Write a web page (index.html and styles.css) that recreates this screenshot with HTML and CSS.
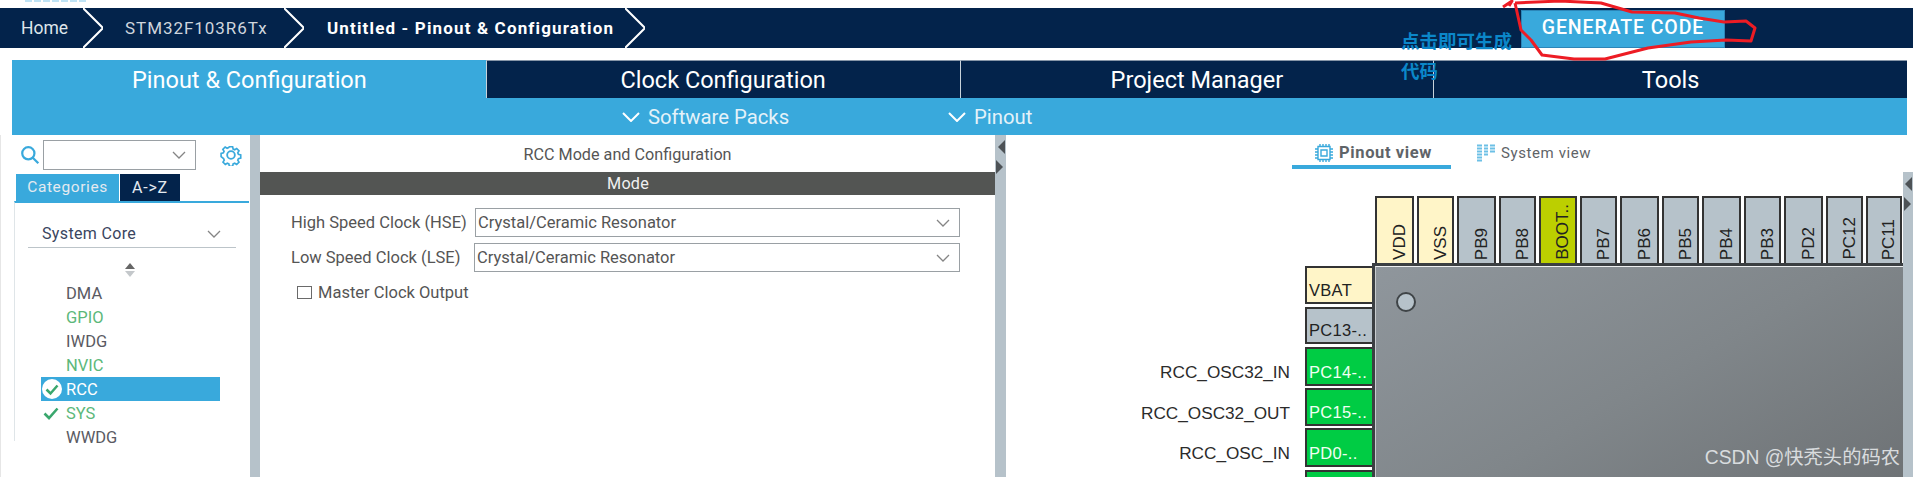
FILE: index.html
```html
<!DOCTYPE html>
<html lang="en">
<head>
<meta charset="utf-8">
<title>STM32CubeMX</title>
<link rel="stylesheet" href="styles.css">
</head>
<body>
<div class="page">
  <div class="top-gap"></div>
  <header class="crumbs">
    <span class="crumb crumb-home">Home</span>
    <svg class="crumb-arrow" viewBox="0 0 20 40"><path d="M0 0 L20 20 L0 40"/></svg>
    <span class="crumb crumb-chip">STM32F103R6Tx</span>
    <svg class="crumb-arrow" viewBox="0 0 20 40"><path d="M0 0 L20 20 L0 40"/></svg>
    <span class="crumb crumb-current">Untitled - Pinout &amp; Configuration</span>
    <svg class="crumb-arrow" viewBox="0 0 20 40"><path d="M0 0 L20 20 L0 40"/></svg>
    <button class="generate">GENERATE CODE</button>
  </header>
  <nav class="tabs">
    <div class="tab tab-active">Pinout &amp; Configuration</div>
    <div class="tab">Clock Configuration</div>
    <div class="tab">Project Manager</div>
    <div class="tab">Tools</div>
  </nav>
  <div class="subbar">
    <span class="sub-item sub-packs"><svg class="sub-chev" viewBox="0 0 18 10"><path d="M1 1 L9 9 L17 1"/></svg>Software Packs</span>
    <span class="sub-item sub-pinout"><svg class="sub-chev" viewBox="0 0 18 10"><path d="M1 1 L9 9 L17 1"/></svg>Pinout</span>
  </div>
  <main class="main">
    <aside class="sidebar">
      <div class="search-row">
        <svg class="search-icon" viewBox="0 0 18 18"><circle cx="7.5" cy="7.5" r="5.5"/><path d="M11.5 11.5 L16.5 16.5"/></svg>
        <div class="search-box"><svg class="small-chev" viewBox="0 0 14 8"><path d="M1 1 L7 7 L13 1"/></svg></div>
        <svg class="gear-icon" viewBox="0 0 24 24"><path d="M10 2h4l.6 2.8 1.9.8 2.4-1.5 2.8 2.8-1.5 2.4.8 1.9 2.8.6v4l-2.8.6-.8 1.9 1.5 2.4-2.8 2.8-2.4-1.5-1.9.8-.6 2.8h-4l-.6-2.8-1.9-.8-2.4 1.5-2.8-2.8 1.5-2.4-.8-1.9L0 14v-4l2.8-.6.8-1.9-1.5-2.4 2.8-2.8 2.4 1.5 1.9-.8z" transform="translate(1.2 1.2) scale(.9)"/><circle cx="12" cy="12" r="4.2"/></svg>
      </div>
      <div class="cat-tabs">
        <span class="cat-tab cat-active">Categories</span>
        <span class="cat-tab">A-&gt;Z</span>
      </div>
      <div class="cat-panel">
        <div class="cat-head"><span>System Core</span><svg class="small-chev" viewBox="0 0 14 8"><path d="M1 1 L7 7 L13 1"/></svg></div>
        <div class="sorter"><i class="sort-up"></i><i class="sort-down"></i></div>
        <ul class="periph">
          <li class="item">DMA</li>
          <li class="item item-ok">GPIO</li>
          <li class="item">IWDG</li>
          <li class="item item-ok">NVIC</li>
          <li class="item item-sel"><svg class="check-round" viewBox="0 0 20 20"><circle cx="10" cy="10" r="10"/><path d="M4.5 10.5 L8.5 14.5 L15.5 6.5"/></svg>RCC</li>
          <li class="item item-ok"><svg class="check-plain" viewBox="0 0 16 14"><path d="M1.5 7.5 L6 12 L14.5 2.5"/></svg>SYS</li>
          <li class="item">WWDG</li>
        </ul>
      </div>
    </aside>
    <div class="strip"></div>
    <section class="config">
      <div class="config-title">RCC Mode and Configuration</div>
      <div class="mode-bar">Mode</div>
      <div class="form-row form-hse">
        <label class="form-label">High Speed Clock (HSE)</label>
        <div class="select"><span>Crystal/Ceramic Resonator</span><svg class="small-chev" viewBox="0 0 14 8"><path d="M1 1 L7 7 L13 1"/></svg></div>
      </div>
      <div class="form-row form-lse">
        <label class="form-label">Low Speed Clock (LSE)</label>
        <div class="select"><span>Crystal/Ceramic Resonator</span><svg class="small-chev" viewBox="0 0 14 8"><path d="M1 1 L7 7 L13 1"/></svg></div>
      </div>
      <div class="check-row"><span class="checkbox"></span>Master Clock Output</div>
    </section>
    <div class="strip strip-mid">
      <i class="arrow-left"></i><i class="arrow-right"></i>
    </div>
    <section class="pinout">
      <div class="views">
        <div class="view view-active">
          <svg class="view-icon" viewBox="0 0 18 18"><path d="M3 2.5h12v13H3zM6 6h6v6H6z" class="chip-line"/><path d="M5 0v3M8 0v3M11 0v3M14 0v3M5 15v3M8 15v3M11 15v3M14 15v3M0 5h3M0 8h3M0 11h3M0 14h3M15 5h3M15 8h3M15 11h3M15 14h3" class="chip-line"/></svg>
          Pinout view
        </div>
        <div class="view">
          <svg class="view-icon" viewBox="0 0 18 18"><path class="sys-lines" d="M0 1.5h5M7 1.5h4M13 1.5h5M0 4.5h5M7 4.5h4M13 4.5h5M0 7.5h5M7 7.5h4M13 7.5h5M0 10.5h5M7 10.5h4M0 13.5h5M0 16.5h5"/></svg>
          System view
        </div>
      </div>
      <div class="top-pins">
        <div class="tpin w39 pin-pow"><span>VDD</span></div>
        <div class="tpin w37 pin-pow"><span>VSS</span></div>
        <div class="tpin w39"><span>PB9</span></div>
        <div class="tpin w37"><span>PB8</span></div>
        <div class="tpin w38 pin-boot"><span>BOOT..</span></div>
        <div class="tpin w37"><span>PB7</span></div>
        <div class="tpin w39"><span>PB6</span></div>
        <div class="tpin w37"><span>PB5</span></div>
        <div class="tpin w39"><span>PB4</span></div>
        <div class="tpin w37"><span>PB3</span></div>
        <div class="tpin w39"><span>PD2</span></div>
        <div class="tpin w37"><span>PC12</span></div>
        <div class="tpin w36"><span>PC11</span></div>
      </div>
      <div class="chip-row">
        <div class="left-pins">
          <div class="pin-row row-wide"><div class="lpin h38 pin-pow">VBAT</div></div>
          <div class="pin-row row-wide"><div class="lpin h37">PC13-..</div></div>
          <div class="pin-row"><span class="pin-label">RCC_OSC32_IN</span><div class="lpin h39 pin-on">PC14-..</div></div>
          <div class="pin-row"><span class="pin-label">RCC_OSC32_OUT</span><div class="lpin h38 pin-on">PC15-..</div></div>
          <div class="pin-row row-wide"><span class="pin-label">RCC_OSC_IN</span><div class="lpin h39 pin-on">PD0-..</div></div>
          <div class="pin-row"><div class="lpin h39 pin-on"></div></div>
        </div>
        <div class="chip">
          <div class="chip-inner"><span class="chip-dot"></span></div>
        </div>
      </div>
    </section>
    <div class="strip strip-right">
      <i class="arrow-left"></i><i class="arrow-right"></i>
    </div>
  </main>
  <div class="note">点击即可生成<br>代码</div>
  <svg class="scribble" viewBox="0 0 1913 477"><path d="M1503 7 L1512 1 L1509 6 M1515 3 L1560 1 L1601 3 L1632 12 L1675 13 L1699 18 L1724 22 L1746 21 L1755 28 L1751 41 L1726 40 L1691 42 L1648 48 L1605 59 L1574 59 L1542 55 L1531 40 L1521 30 L1515 3"/></svg>
  <div class="watermark">CSDN @快秃头的码农</div>
</div>
</body>
</html>
```
FILE: styles.css
```css
* { box-sizing: border-box; }
html, body { margin: 0; padding: 0; background: #fff; }
.page {
  position: relative;
  width: 1913px;
  height: 477px;
  overflow: hidden;
  font-family: Roboto, "Liberation Sans", sans-serif;
  color: #555;
}
.top-gap { height: 8px; padding: 0 0 0 25px; }
.top-gap::before {
  content: "";
  display: block;
  width: 63px;
  height: 2px;
  background: repeating-linear-gradient(90deg, #bfe3f5 0 7px, #fff 7px 9px);
}

.crumbs {
  display: flex;
  align-items: center;
  height: 40px;
  background: #03234b;
  color: #fff;
  position: relative;
}
.crumb { font-size: 17px; white-space: nowrap; }
.crumb-home { margin-left: 21px; width: 62px; font-size: 17.5px; color: #dfe5ea; }
.crumb-chip { margin-left: 22px; width: 159px; color: #cfd6de; letter-spacing: .95px; }
.crumb-current { margin-left: 23px; width: 298px; font-weight: 700; letter-spacing: 1.15px; }
.crumb-arrow { width: 20px; height: 40px; flex: none; }
.crumb-arrow path { fill: none; stroke: #fff; stroke-width: 2; }
.generate {
  margin-left: 876px;
  margin-top: 1px;
  width: 204px;
  height: 38px;
  border: 1px solid #2c86b8;
  background: #39a9dc;
  color: #fff;
  font: 500 19.5px Roboto, sans-serif;
  letter-spacing: .9px;
  padding: 0 0 2px;
}

.tabs {
  display: flex;
  height: 38px;
  margin: 12px 6px 0 12px;
  background: #03234b;
}
.tab {
  flex: 1;
  text-align: center;
  color: #fff;
  font-size: 23.5px;
  line-height: 38px;
  border-left: 1px solid #c8d2da;
  border-top: 1px solid #8796a8;
}
.tab-active { background: #39a9dc; border-color: #39a9dc; }
.subbar {
  position: relative;
  display: flex;
  height: 37px;
  margin: 0 6px 0 12px;
  background: #39a9dc;
  color: #e4f2f9;
  font-size: 20.3px;
  line-height: 36px;
}
.sub-item { display: flex; align-items: center; white-space: nowrap; }
.sub-packs { margin-left: 610px; width: 326px; }
.sub-chev { width: 18px; height: 10px; margin-right: 8px; }
.sub-chev path { fill: none; stroke: #fff; stroke-width: 2; }

.main { display: flex; height: 342px; }
.sidebar { width: 250px; flex: none; padding-left: 13px; border-left: 1px solid #e6e6e6; }
.strip { position: relative; width: 10px; flex: none; background: #b6c2ca; }
.strip-mid { width: 11px; }
.strip-right { margin-top: 37px; }
.arrow-left, .arrow-right {
  position: absolute;
  right: 1px;
  width: 0;
  height: 0;
  border-top: 7px solid transparent;
  border-bottom: 7px solid transparent;
}
.arrow-left { top: 5px; border-right: 7px solid #4d5256; }
.arrow-right { top: 25px; left: 1px; border-left: 7px solid #4d5256; }

.search-row { display: flex; align-items: center; height: 36px; padding-top: 3px; }
.search-icon { width: 20px; height: 20px; margin-left: 6px; flex: none; }
.search-icon circle, .search-icon path { fill: none; stroke: #39a9dc; stroke-width: 2; }
.search-box {
  display: flex;
  align-items: center;
  justify-content: flex-end;
  width: 153px;
  height: 30px;
  margin-left: 3px;
  padding-right: 9px;
  border: 1px solid #9aa0a4;
}
.small-chev { width: 14px; height: 8px; flex: none; }
.small-chev path { fill: none; stroke: #858585; stroke-width: 1.3; }
.gear-icon { width: 22px; height: 22px; margin-left: 24px; }
.gear-icon path, .gear-icon circle { fill: none; stroke: #39a9dc; stroke-width: 2; }

.cat-tabs { display: flex; gap: 1px; margin: 3px 0 0 2px; height: 27px; }
.cat-tab {
  width: 60px;
  background: #03234b;
  color: #e4eaf0;
  text-align: center;
  font-size: 16px;
  line-height: 27px;
  letter-spacing: .8px;
}
.cat-active { width: 103px; background: #39a9dc; font-size: 15.5px; letter-spacing: .6px; }
.cat-panel {
  width: 235px;
  height: 240px;
  border-top: 2px solid #39a9dc;
  border-left: 1px solid #dfe5e8;
}
.cat-head {
  display: flex;
  justify-content: space-between;
  align-items: center;
  height: 45px;
  margin: 0 13px 0 13px;
  padding: 17px 15px 0 14px;
  border-bottom: 1px solid #bcc4c9;
  color: #3a4560;
  font-size: 16px;
  letter-spacing: .35px;
}
.sorter { display: flex; flex-direction: column; align-items: flex-start; gap: 2px; margin-top: 15px; padding-left: 110px; }
.sort-up, .sort-down { width: 0; height: 0; border-left: 5px solid transparent; border-right: 5px solid transparent; }
.sort-up { border-bottom: 6px solid #666; }
.sort-down { border-top: 6px solid #c4c8cb; }
.periph { list-style: none; margin: 4px 0 0 26px; padding: 0; }
.item {
  position: relative;
  width: 179px;
  height: 24px;
  padding-left: 25px;
  line-height: 25px;
  font-size: 16.5px;
  color: #5a5a62;
}
.item-ok { color: #5cb87a; }
.item-sel { background: #39a9dc; color: #fff; }
.check-round { position: absolute; left: 1px; top: 2px; width: 20px; height: 20px; }
.check-round circle { fill: #fff; }
.check-round path { fill: none; stroke: #3aa76d; stroke-width: 2.5; }
.check-plain { position: absolute; left: 2px; top: 5px; width: 16px; height: 14px; }
.check-plain path { fill: none; stroke: #3aa76d; stroke-width: 2.6; }

.config { width: 735px; flex: none; }
.config-title { height: 37px; text-align: center; padding-top: 10px; font-size: 16.2px; color: #555; }
.mode-bar {
  height: 23px;
  line-height: 24px;
  margin-right: -1px;
  background: #535553;
  color: #f0f0f0;
  text-align: center;
  font-size: 16.2px;
  letter-spacing: .2px;
}
.form-row { display: flex; align-items: center; height: 29px; color: #555; font-size: 16.5px; }
.form-hse { margin-top: 13px; }
.form-lse { margin-top: 6px; }
.form-label { margin-left: 31px; white-space: nowrap; }
.form-hse .form-label { width: 184px; }
.form-lse .form-label { width: 183px; }
.select {
  display: flex;
  align-items: center;
  justify-content: space-between;
  height: 29px;
  padding: 0 9px 0 2px;
  border: 1px solid #9aa0a4;
  width: 485px;
}
.form-lse .select { width: 486px; }
.check-row { display: flex; align-items: center; margin: 11px 0 0 37px; font-size: 16.5px; color: #555; }
.checkbox { width: 15px; height: 13px; margin-right: 6px; border: 1px solid #6a6a6a; }

.pinout { width: 897px; flex: none; display: flex; flex-direction: column; }
.views { display: flex; height: 34px; padding-left: 286px; }
.view {
  display: flex;
  align-items: center;
  justify-content: center;
  gap: 6px;
  height: 34px;
  color: #5f6468;
  font-size: 15px;
  letter-spacing: .6px;
  padding-top: 5px;
}
.view-active { width: 159px; padding-left: 4px; font-size: 16.5px; font-weight: 700; border-bottom: 4px solid #39a9dc; margin-right: 26px; }
.view:not(.view-active) { padding-bottom: 4px; }
.view-icon { width: 18px; height: 18px; }
.chip-line { fill: none; stroke: #39a9dc; stroke-width: 1.4; }
.sys-lines { fill: none; stroke: #6cc0e6; stroke-width: 2; }

.top-pins { display: flex; gap: 3px; height: 67px; margin-top: 27px; padding-left: 369px; }
.tpin {
  display: flex;
  justify-content: center;
  align-items: flex-end;
  height: 67px;
  padding: 0 0 3px 10px;
  background: #b6c2ca;
  border: 2px solid #333;
  border-bottom: 0;
  color: #222;
  font: 17px "Liberation Sans", sans-serif;
}
.tpin span { writing-mode: vertical-rl; transform: rotate(180deg); white-space: nowrap; }
.w36 { width: 36px; }
.w37 { width: 37px; }
.w38 { width: 38px; }
.w39 { width: 39px; }
.pin-pow { background: #fff5c8; }
.pin-boot { background: #bccf00; }

.chip-row { display: flex; flex: 1; }
.left-pins {
  display: flex;
  flex-direction: column;
  gap: 2px;
  width: 366px;
  padding-top: 3px;
  font-family: "Liberation Sans", sans-serif;
}
.pin-row { display: flex; justify-content: flex-end; align-items: center; gap: 15px; }
.row-wide { margin-bottom: 1px; }
.pin-label { color: #2b2b2b; font-size: 17.2px; white-space: nowrap; margin-top: 12px; }
.lpin {
  display: flex;
  align-items: flex-end;
  flex: none;
  width: 67px;
  padding: 0 0 2px 2px;
  background: #b6c2ca;
  border: 2px solid #333;
  border-right: 0;
  color: #222;
  font-size: 16.5px;
  line-height: 20px;
  letter-spacing: .3px;
  white-space: nowrap;
}
.lpin.pin-pow { background: #fff5c8; }
.h37 { height: 37px; }
.h38 { height: 38px; }
.h39 { height: 39px; }
.pin-on { background: #00cc44; color: #f0fff4; }
.chip {
  flex: 1;
  background: #3b3f42;
  padding: 3px 0 0 3px;
}
.chip-inner {
  position: relative;
  height: 100%;
  border-top: 1px solid #eef0f1;
  border-left: 1px solid #c8ccce;
  background: linear-gradient(150deg, #8f969c 0%, #80868a 50%, #6c7073 100%);
}
.chip-dot {
  position: absolute;
  left: 20px;
  top: 25px;
  width: 20px;
  height: 20px;
  border-radius: 50%;
  border: 2px solid #3f4447;
  background: #b6c2ca;
}

.note {
  position: absolute;
  left: 1401px;
  top: 25px;
  color: #0b87c9;
  font: 700 18.5px/30px "Noto Sans CJK SC", sans-serif;
}
.scribble { position: absolute; left: 0; top: 0; width: 1913px; height: 477px; pointer-events: none; }
.scribble path { fill: none; stroke: #ed1c24; stroke-width: 3; stroke-linejoin: round; }
.watermark {
  position: absolute;
  right: 13px;
  top: 442px;
  color: #d9dcde;
  font: 19.3px "Liberation Sans", "Noto Sans CJK SC", sans-serif;
  white-space: nowrap;
}
```
